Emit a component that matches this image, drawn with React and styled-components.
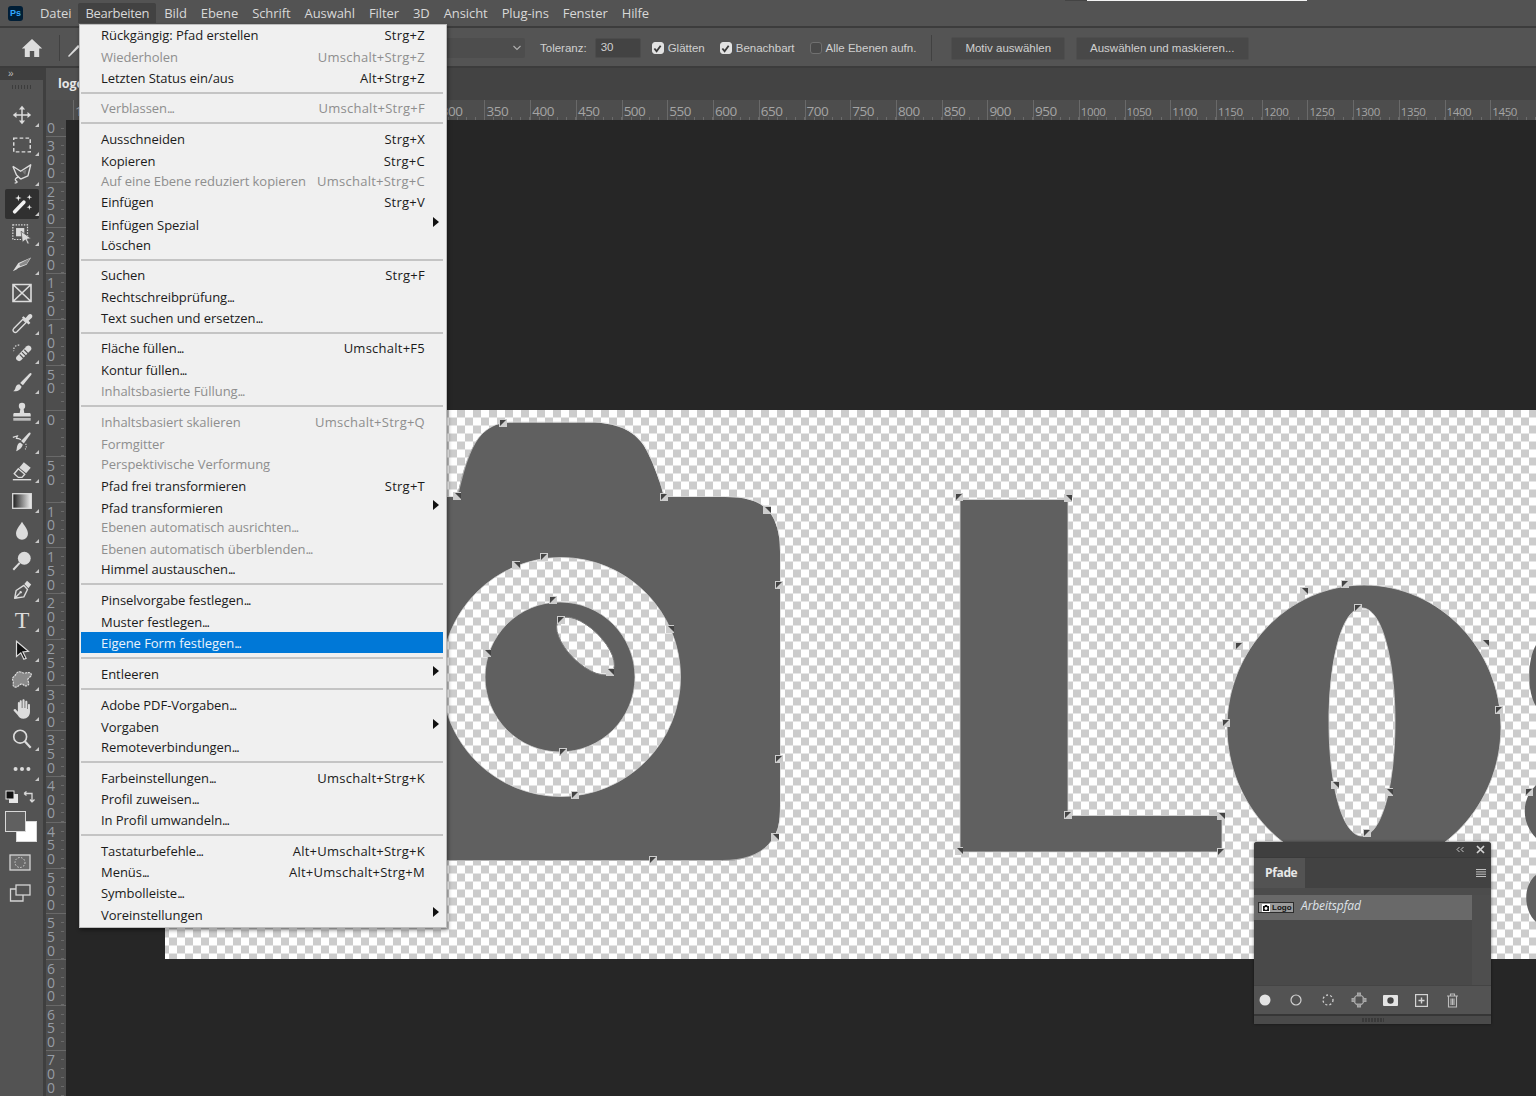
import React from "react";
import styled, { createGlobalStyle } from "styled-components";

const GlobalStyle = createGlobalStyle`
  html, body {
    margin: 0;
    padding: 0;
    background: #262626;
  }
  * { box-sizing: border-box; }
`;

const UI = `"Open Sans", "Noto Sans", sans-serif`;
const COND = `"Liberation Sans", "Open Sans", sans-serif`;

const Page = styled.div`
  position: relative;
  width: 1536px;
  height: 1096px;
  overflow: hidden;
  display: flex;
  flex-direction: column;
  background: #262626;
  font-family: ${UI};
`;

/* ---------- menu bar ---------- */
const MenuBar = styled.div`
  position: relative;
  height: 26px;
  flex: none;
  display: flex;
  align-items: center;
  padding-left: 8px;
  background: #535353;
`;

const PsLogo = styled.div`
  width: 15px;
  height: 15px;
  margin-right: 10px;
  border-radius: 3px;
  background: #001e36;
  color: #31a8ff;
  font: bold 9px/15px ${COND};
  text-align: center;
`;

const TopItem = styled.div`
  height: 20px;
  padding: 0 7px;
  margin-right: ${(p) => p.$gap || 0}px;
  border-radius: 2px 2px 0 0;
  font-size: 13px;
  line-height: 20px;
  letter-spacing: ${(p) => (p.$open ? -0.3 : -0.08)}px;
  color: #d8d8d8;
  background: ${(p) => (p.$open ? "#424242" : "transparent")};
`;

const TitleStrip = styled.div`
  position: absolute;
  top: 0;
  left: 1065px;
  width: 242px;
  height: 1px;
  background: linear-gradient(90deg, #444 0 22px, #f4f4f4 22px);
`;

/* ---------- options bar ---------- */
const OptionsBar = styled.div`
  height: 42px;
  flex: none;
  display: flex;
  align-items: center;
  padding: 2px 0 0 21px;
  background: #545454;
  border-top: 2px solid #3c3c3c;
  border-bottom: 2px solid #3c3c3c;
  color: #d0d0d0;
  font-family: ${COND};
  font-size: 11.5px;
`;

const OptionDivider = styled.div`
  width: 1px;
  height: 26px;
  margin: 0 ${(p) => p.$right}px 0 ${(p) => p.$left}px;
  background: #414141;
`;

const SelectBox = styled.div`
  width: 323px;
  height: 20px;
  margin: 0 15px 0 120px;
  display: flex;
  align-items: center;
  justify-content: flex-end;
  padding-right: 3px;
  background: #4d4d4d;
  border-radius: 2px;
  color: #aaa;
`;

const OptionLabel = styled.span`
  margin-right: ${(p) => p.$right || 0}px;
  white-space: nowrap;
`;

const NumberBox = styled.div`
  width: 46px;
  height: 20px;
  margin: 0 11px 0 8px;
  padding-left: 5px;
  background: #434343;
  border: 1px solid #4c4c4c;
  border-radius: 2px;
  line-height: 17px;
`;

const CheckBox = styled.div`
  width: 12px;
  height: 12px;
  margin-right: 4px;
  border-radius: 3px;
  display: flex;
  align-items: center;
  justify-content: center;
  background: ${(p) => (p.$on ? "#e2e2e2" : "#4a4a4a")};
  border: 1px solid ${(p) => (p.$on ? "#e2e2e2" : "#707070")};
`;

const OptionButton = styled.div`
  height: 23px;
  margin-right: 11px;
  padding: 0 ${(p) => p.$pad}px;
  background: #484848;
  border: 1px solid #4e4e4e;
  border-radius: 2px;
  line-height: 20px;
  white-space: nowrap;
`;

/* ---------- body ---------- */
const Body = styled.div`
  flex: 1;
  min-height: 0;
  display: flex;
`;

const ToolColumn = styled.div`
  width: 46px;
  flex: none;
  display: flex;
  flex-direction: column;
  background: #535353;
  border-right: 3px solid #3f3f3f;
`;

const ToolHeader = styled.div`
  height: 12px;
  padding-left: 8px;
  background: #3f3f3f;
  color: #bcbcbc;
  font: 10px/11px ${COND};
`;

const ToolGrip = styled.div`
  height: 20px;
  display: flex;
  justify-content: center;
  padding-top: 5px;
  &::before {
    content: "";
    width: 20px;
    height: 4px;
    background: repeating-linear-gradient(90deg, #3c3c3c 0 1px, transparent 1px 3px);
  }
`;

const Tool = styled.div`
  position: relative;
  height: 29.73px;
  margin: 0 4px 0 5px;
  display: flex;
  align-items: center;
  justify-content: center;
  border-radius: 2px;
  background: ${(p) => (p.$active ? "#303030" : "transparent")};
  color: #dcdcdc;
  &::after {
    content: "";
    display: ${(p) => (p.$corner ? "block" : "none")};
    position: absolute;
    right: 0;
    bottom: 3px;
    border-left: 4px solid transparent;
    border-bottom: 4px solid #c8c8c8;
  }
`;

const ToolGlyph = styled.span`
  font: 24px/24px "Liberation Serif", serif;
  color: #dcdcdc;
`;

const SwapRow = styled.div`
  height: 20px;
  margin: 3px 7px 0 5px;
  display: flex;
  align-items: center;
  justify-content: space-between;
`;

const ColorWell = styled.div`
  position: relative;
  width: 33px;
  height: 32px;
  margin: 4px 0 0 5px;
`;

const ColorSwatch = styled.div`
  position: absolute;
  width: 21px;
  height: 21px;
  left: ${(p) => p.$x}px;
  top: ${(p) => p.$y}px;
  background: ${(p) => p.$color};
  border: 1px solid #d8d8d8;
`;

const ScreenTool = styled.div`
  position: relative;
  height: 30px;
  margin-top: ${(p) => p.$top || 0}px;
  display: flex;
  align-items: center;
  justify-content: center;
  padding-right: 3px;
`;

const Main = styled.div`
  flex: 1;
  min-width: 0;
  display: flex;
  flex-direction: column;
`;

const TabRow = styled.div`
  height: 32px;
  flex: none;
  background: #434343;
`;

const DocTab = styled.div`
  width: 60px;
  height: 32px;
  padding: 9px 0 0 12px;
  background: #505050;
  color: #e6e6e6;
  font: bold 12.5px/14px ${UI};
`;

const HRuler = styled.div`
  height: 20px;
  flex: none;
  display: flex;
  background: #4d4d4d;
  overflow: hidden;
`;

const RulerCorner = styled.div`
  width: 27px;
  flex: none;
`;

const HCell = styled.div`
  width: 45.72px;
  flex: none;
  padding: 3px 0 0 1px;
  border-left: 1px solid #696969;
  color: #a4a4a4;
  font: ${(p) => (p.$small ? 11.5 : 13.5)}px/${(p) => (p.$small ? 18 : 17)}px ${UI};
  letter-spacing: ${(p) => (p.$small ? -0.4 : -0.5)}px;
  white-space: nowrap;
  background: repeating-linear-gradient(90deg, transparent 0 8px, #6a6a6a 8px 9px) 0 100% / 100% 3px no-repeat;
`;

const Work = styled.div`
  flex: 1;
  min-height: 0;
  display: flex;
`;

const VRuler = styled.div`
  width: 20px;
  flex: none;
  background: #4d4d4d;
  overflow: hidden;
`;

const VCell = styled.div`
  height: ${(p) => p.$h || 45.72}px;
  padding: ${(p) => (p.$first ? 1 : 2)}px 0 0 1px;
  border-top: ${(p) => (p.$first ? "none" : "1px solid #696969")};
  color: #969ca4;
  font: 14px/13.7px ${UI};
  background: repeating-linear-gradient(180deg, transparent 0 8px, #6a6a6a 8px 9px) 15px 0 / 3px 100% no-repeat;
`;

const VDigit = styled.span`
  display: block;
`;

const Canvas = styled.div`
  flex: 1;
  min-width: 0;
  padding: 290px 0 0 99px;
  background: #262626;
`;

const Doc = styled.div`
  height: 549px;
  background: repeating-conic-gradient(#cccccc 0 25%, #ffffff 0 50%) -4px -0.5px / 16px 16px;
`;

/* ---------- dropdown ---------- */
const Dropdown = styled.div`
  position: absolute;
  left: 79px;
  top: 24px;
  width: 368px;
  height: 904px;
  background: #f0f0f0;
  border: 1px solid #bdbdbd;
  box-shadow: 1px 2px 4px rgba(0, 0, 0, 0.45);
`;

const Row = styled.div`
  position: relative;
  height: 21px;
  margin: ${(p) => p.$nudge || 0}px 3px 0 1px;
  padding: 0 18px 0 20px;
  display: flex;
  align-items: center;
  justify-content: space-between;
  font-size: 13px;
  letter-spacing: -0.05px;
  white-space: nowrap;
  color: ${(p) => (p.$hot ? "#eaf3fc" : p.$off ? "#8e8e8e" : "#1b1b1b")};
  background: ${(p) => (p.$hot ? "#0078d7" : "transparent")};
`;

const Shortcut = styled.span`
  letter-spacing: 0.25px;
`;

const Dots = styled.span`
  letter-spacing: -1.2px;
`;

const Arrow = styled.span`
  position: absolute;
  right: 4px;
  top: 3px;
  border-left: 6px solid #111;
  border-top: 5px solid transparent;
  border-bottom: 5px solid transparent;
`;

const Rule = styled.div`
  height: 9px;
  margin: 0 3px 0 1px;
  display: flex;
  align-items: center;
  &::before {
    content: "";
    width: 100%;
    height: 2px;
    background: #c4c4c4;
  }
`;

/* ---------- paths panel ---------- */
const Panel = styled.div`
  position: absolute;
  left: 1254px;
  top: 842px;
  width: 237px;
  height: 182px;
  display: flex;
  flex-direction: column;
  border-radius: 3px 3px 0 0;
  background: #494949;
  box-shadow: 0 0 3px rgba(0, 0, 0, 0.5);
`;

const PanelTitle = styled.div`
  height: 15px;
  flex: none;
  display: flex;
  align-items: center;
  justify-content: flex-end;
  gap: 12px;
  padding-right: 6px;
  background: #3f3f3f;
  border-radius: 3px 3px 0 0;
`;

const PanelTabs = styled.div`
  height: 31px;
  flex: none;
  display: flex;
  align-items: center;
  justify-content: space-between;
  padding-right: 5px;
  background: #424242;
  border-top: 1px solid #3a3a3a;
`;

const PanelTab = styled.div`
  width: 51px;
  height: 30px;
  padding-left: 11px;
  background: #535353;
  color: #e8e8e8;
  font: bold 12px/29px ${UI};
  letter-spacing: -0.35px;
`;

const PanelList = styled.div`
  flex: 1;
  min-height: 0;
  display: flex;
  border-top: 7px solid #4c4c4c;
`;

const PathArea = styled.div`
  flex: 1;
`;

const ScrollTrack = styled.div`
  width: 19px;
  background: #4e4e4e;
`;

const PathRow = styled.div`
  height: 25px;
  display: flex;
  align-items: center;
  padding-left: 4px;
  background: #696969;
`;

const Thumb = styled.div`
  width: 36px;
  height: 11px;
  margin-right: 7px;
  display: flex;
  align-items: center;
  gap: 2px;
  padding-left: 3px;
  background: #9c9c9c;
  border: 1px solid #2c2c2c;
  overflow: hidden;
`;

const ThumbText = styled.span`
  color: #111;
  font: bold 8px/9px ${COND};
`;

const PathName = styled.span`
  color: #dfe3e8;
  font-size: 12px;
  font-style: italic;
  letter-spacing: -0.1px;
  margin-top: -5px;
`;

const PanelFooter = styled.div`
  height: 29px;
  flex: none;
  display: flex;
  align-items: center;
  background: #535353;
  border-top: 1px solid #444;
  padding-left: 0;
`;

const FooterIcon = styled.div`
  width: 31.3px;
  flex: none;
  margin-left: ${(p) => p.$lead || 0}px;
  display: flex;
  justify-content: center;
`;

const PanelGrip = styled.div`
  height: 10px;
  flex: none;
  display: flex;
  align-items: center;
  justify-content: center;
  background: #4a4a4a;
  border-top: 2px solid #363636;
  &::before {
    content: "";
    width: 22px;
    height: 4px;
    background: repeating-linear-gradient(90deg, #3a3a3a 0 2px, transparent 2px 3px);
  }
`;

/* ---------- data ---------- */
const topMenus = ["Bild", "Ebene", "Schrift", "Auswahl", "Filter", "3D", "Ansicht", "Plug-ins", "Fenster", "Hilfe"];

// n = extra px above the row, the reference's rows are not evenly spaced
const menuGroups = [
  [
    { t: "Rückgängig: Pfad erstellen", k: "Strg+Z", n: -1 },
    { t: "Wiederholen", k: "Umschalt+Strg+Z", off: true, n: 1 },
    { t: "Letzten Status ein/aus", k: "Alt+Strg+Z" },
  ],
  [{ t: "Verblassen...", k: "Umschalt+Strg+F", off: true }],
  [
    { t: "Ausschneiden", k: "Strg+X", n: 1 },
    { t: "Kopieren", k: "Strg+C", n: 1 },
    { t: "Auf eine Ebene reduziert kopieren", k: "Umschalt+Strg+C", off: true, n: -1 },
    { t: "Einfügen", k: "Strg+V" },
    { t: "Einfügen Spezial", sub: true, n: 2 },
    { t: "Löschen", n: -1 },
  ],
  [
    { t: "Suchen", k: "Strg+F" },
    { t: "Rechtschreibprüfung...", n: 1 },
    { t: "Text suchen und ersetzen..." },
  ],
  [
    { t: "Fläche füllen...", k: "Umschalt+F5" },
    { t: "Kontur füllen...", n: 1 },
    { t: "Inhaltsbasierte Füllung...", off: true },
  ],
  [
    { t: "Inhaltsbasiert skalieren", k: "Umschalt+Strg+Q", off: true, n: 1 },
    { t: "Formgitter", off: true, n: 1 },
    { t: "Perspektivische Verformung", off: true, n: -1 },
    { t: "Pfad frei transformieren", k: "Strg+T", n: 1 },
    { t: "Pfad transformieren", sub: true, n: 1 },
    { t: "Ebenen automatisch ausrichten...", off: true, n: -2 },
    { t: "Ebenen automatisch überblenden...", off: true, n: 1 },
    { t: "Himmel austauschen...", n: -1 },
  ],
  [
    { t: "Pinselvorgabe festlegen...", n: 1 },
    { t: "Muster festlegen...", n: 1 },
    { t: "Eigene Form festlegen...", hot: true },
  ],
  [{ t: "Entleeren", sub: true, n: 1 }],
  [
    { t: "Adobe PDF-Vorgaben...", n: 1 },
    { t: "Vorgaben", sub: true, n: 1 },
    { t: "Remoteverbindungen...", n: -1 },
  ],
  [
    { t: "Farbeinstellungen...", k: "Umschalt+Strg+K", n: 1 },
    { t: "Profil zuweisen..." },
    { t: "In Profil umwandeln..." },
  ],
  [
    { t: "Tastaturbefehle...", k: "Alt+Umschalt+Strg+K", n: 1 },
    { t: "Menüs...", k: "Alt+Umschalt+Strg+M" },
    { t: "Symbolleiste..." },
    { t: "Voreinstellungen", sub: true, n: 1 },
  ],
];

const menuLabel = (t) =>
  t.endsWith("...") ? (
    <>
      {t.slice(0, -3)}
      <Dots>...</Dots>
    </>
  ) : (
    t
  );

// cells from 50 up to 250 lie fully under the open menu, so they stay empty
const hLabels = ["100", "", "", "", "", "", "", "", "300"];
for (let v = 350; v <= 1450; v += 50) hLabels.push(String(v));

const vLabels = [];
for (let v = 300; v >= 0; v -= 50) vLabels.push(v);
for (let v = 50; v <= 700; v += 50) vLabels.push(v);

/* ---------- icons ---------- */
const Ico = ({ children, size = 22, view = 24 }) => (
  <svg width={size} height={size} viewBox={`0 0 ${view} ${view}`} fill="currentColor" stroke="none">
    {children}
  </svg>
);

const toolIcons = [
  // move
  <Ico key="move">
    <path d="M11.2 6h1.6v5.2H18V8.6l4 3.4-4 3.4v-2.6h-5.2V18h2.6L12 22l-3.4-4h2.6v-5.2H6v2.6L2 12l4-3.4v2.6h5.2V6H8.6L12 2l3.4 4z" />
  </Ico>,
  // marquee
  <Ico key="marquee">
    <rect x="3" y="4.500" width="18" height="15" fill="none" stroke="currentColor" strokeWidth="1.600" strokeDasharray="4 2.400" />
  </Ico>,
  // lasso
  <Ico key="lasso">
    <path d="M2 3.500l8.500 5.500L21.500 2l-3 12-8 3.500M2 3.500l4 9.500 4.500 4.500" fill="none" stroke="currentColor" strokeWidth="1.500" strokeLinejoin="round" />
    <path d="M8 15.500c-3 1-4.500 2.500-2.500 4s1.500 2-1.500 2.500" fill="none" stroke="currentColor" strokeWidth="1.400" />
    <path d="M12 9l5-2-1.500 6z" fill="#7a7a7a" />
  </Ico>,
  // wand
  <Ico key="wand">
    <path d="M4 20.500L14 10" stroke="#f2f2f2" strokeWidth="4" strokeLinecap="round" />
    <path d="M8 2l.8 2.700 2.700.8-2.700.8L8 9l-.8-2.700-2.700-.8 2.700-.8zM20 1.500l.7 2.300 2.300.7-2.300.7-.7 2.300-.7-2.300-2.300-.7 2.300-.7zM20 12.500l.7 2.300 2.300.7-2.300.7-.7 2.300-.7-2.300-2.300-.7 2.300-.7z" fill="#f2f2f2" />
  </Ico>,
  // object selection
  <Ico key="object">
    <rect x="2" y="2" width="16" height="16" fill="none" stroke="currentColor" strokeWidth="1.300" strokeDasharray="1.600 1.400" />
    <rect x="5.500" y="5.500" width="9" height="9" />
    <path d="M11 9l11 8-4.400.6L20 22.400l-2 .6-2.200-4.600L12.400 21z" stroke="#535353" strokeWidth="0.800" />
  </Ico>,
  // slice
  <Ico key="slice">
    <path d="M2 21l6-9 14-6-5 8-9 3.400L6 19z" />
    <path d="M9 13l12-6.400-4 6.400-7 2.600z" fill="#8a8a8a" />
  </Ico>,
  // frame
  <Ico key="frame" size={24}>
    <path d="M3 3.500h18v17H3zM3 3.500l18 17M21 3.500l-18 17" fill="none" stroke="currentColor" strokeWidth="1.600" />
  </Ico>,
  // eyedropper
  <Ico key="dropper">
    <path d="M3 21.500c-1-1-.8-2.500 0-3.400L13 8l3.500 3.500-10 10c-1 .9-2.500 1-3.500 0z" fill="none" stroke="currentColor" strokeWidth="1.500" />
    <path d="M12 6l1.500-1.500 2.500 2 3-3.500c1.200-1 2.800-1 3.700 0s.8 2.400-.2 3.500l-3.300 3 2 2.500L19 13.500z" />
  </Ico>,
  // healing
  <Ico key="heal">
    <path d="M6 16L17 4.500c1.200-1 3-1 4.300.3s1.300 3 .2 4.200L11 20c-1.200 1.200-3 1.200-4.300 0s-1.800-2.800-.7-4z" />
    <path d="M9.500 13.500l5 5M12 11l5 5M14.500 8.500l5 5" stroke="#535353" strokeWidth="1.300" />
    <path d="M9 3.500C5 3 2.500 6 3 10" fill="none" stroke="currentColor" strokeWidth="1.300" strokeDasharray="1.600 1.600" />
  </Ico>,
  // brush
  <Ico key="brush">
    <path d="M22 2.500c.6.500.5 1 0 1.800L13 15.500l-3-2.500L20 3c.8-.7 1.400-1 2-.5z" />
    <path d="M9 14.500l2.500 2.300c-.5 3-3.500 5.700-9 5.200 2.500-1.500 2-3.500 3-5.300.7-1.200 2-2.200 3.500-2.200z" />
  </Ico>,
  // stamp
  <Ico key="stamp">
    <circle cx="12" cy="5.500" r="3.500" />
    <path d="M10.300 8h3.400l.8 5H20c1 0 1.500.7 1.500 1.500V17h-19v-2.500c0-.8.5-1.500 1.500-1.500h5.500z" />
    <rect x="2.500" y="18.500" width="19" height="3" fill="#bdbdbd" />
  </Ico>,
  // history brush
  <Ico key="history">
    <path d="M21 2c.6.500.5 1 0 1.800l-7 9.700-3-2.500 8-8.500c.8-.7 1.400-1 2-.5z" />
    <path d="M10 12.500l2.800 2.300c-.4 3-3.400 6.200-7.300 7.200 1-2.200.6-3.700 1.200-5.500.5-1.700 1.800-3.800 3.300-4z" />
    <path d="M2 7l5-1.500-1 2.500c3 0 4 1 5 1.500" fill="none" stroke="currentColor" strokeWidth="1.300" />
    <path d="M16 14c1 2 1 4-.5 6" fill="none" stroke="currentColor" strokeWidth="1.200" strokeDasharray="1.200 1.500" />
  </Ico>,
  // eraser
  <Ico key="eraser">
    <path d="M14 2.500l7.500 6-5 6-7.500-6z" />
    <path d="M8 9.500l7 6-3 3.500H8l-4.500-4z" fill="none" stroke="currentColor" strokeWidth="1.500" />
    <path d="M2 21.500h20" stroke="currentColor" strokeWidth="1.500" />
  </Ico>,
  // gradient
  <svg key="gradient" width="20" height="16" viewBox="0 0 20 16">
    <defs>
      <linearGradient id="gradTool" x1="0" x2="1" y1="0" y2="0">
        <stop offset="0" stopColor="#1c1c1c" />
        <stop offset="1" stopColor="#f2f2f2" />
      </linearGradient>
    </defs>
    <rect x="0.700" y="0.700" width="18.600" height="14.600" fill="url(#gradTool)" stroke="#dcdcdc" strokeWidth="1.300" />
  </svg>,
  // blur
  <Ico key="blur">
    <path d="M12 2c2.500 4.500 6.500 8 6.500 13a6.500 6.500 0 0 1-13 0C5.500 10 9.500 6.500 12 2z" />
  </Ico>,
  // dodge
  <Ico key="dodge">
    <circle cx="14.500" cy="9" r="7" />
    <path d="M9.500 14L2.500 21.500" stroke="currentColor" strokeWidth="2.200" />
  </Ico>,
  // pen
  <Ico key="pen">
    <path d="M4 21l1.600-8.500 8.400-5.500 4 4.500-4 8L4 21zM4 21l5.500-5.500" fill="none" stroke="currentColor" strokeWidth="1.500" strokeLinejoin="round" />
    <path d="M14.500 5.500l3-3.500 4.500 4-3 4z" />
    <circle cx="10.500" cy="14.500" r="1.300" />
  </Ico>,
  // type
  <ToolGlyph key="type">T</ToolGlyph>,
  // path selection
  <Ico key="path">
    <path d="M6 2.500l13 11-6 .6 3.500 7-2.500 1-3.300-7L6 19z" fill="#111" stroke="#dcdcdc" strokeWidth="1.300" />
  </Ico>,
  // shape
  <Ico key="shape">
    <path d="M9 3c3 0 3.500 2 6 1.500s6-1.500 7 1-2.500 3.500-3.500 5.500 3 5-.5 7-4.500-2.500-7-1.500-4 4-7 3-1-4-1.500-6S.500 10.500 3 8.500 6 3 9 3z" fill="#8a8a8a" stroke="#dcdcdc" strokeWidth="1.300" strokeDasharray="2.400 .8" />
  </Ico>,
  // hand
  <Ico key="hand">
    <path d="M9.500 3.500c0-1.500 2.200-1.500 2.200 0V11h.8V2.500c0-1.500 2.300-1.500 2.300 0V11h.8V4c0-1.500 2.200-1.500 2.200 0v8h.7V7.500c0-1.400 2.200-1.400 2.200 0V15c0 4.500-3 7.500-7 7.500-3.500 0-5-1.500-6.500-4L3 14c-.8-1.300 1-2.700 2.300-1.500L7.500 15V5.500c0-1.400 2-1.400 2 0z" />
  </Ico>,
  // zoom
  <Ico key="zoom">
    <circle cx="10" cy="9.500" r="7" fill="none" stroke="currentColor" strokeWidth="1.800" />
    <path d="M15 14.500l6.500 7" stroke="currentColor" strokeWidth="2.400" />
  </Ico>,
  // more
  <Ico key="more">
    <circle cx="5" cy="12" r="2.200" />
    <circle cx="12" cy="12" r="2.200" />
    <circle cx="19" cy="12" r="2.200" />
  </Ico>,
];

/* ---------- artwork ---------- */
const ART_FILL = "#606060";
const LINE = "#d8d8d8";

const Anchor = ({ x, y, flip }) => (
  <g transform={`translate(${x - 4} ${y - 4})`}>
    <rect width="8" height="8" fill="#cdcdcd" />
    <path d={flip ? "M8 1v6L2 1z" : "M1 1h6L1 7z"} fill="#444" />
  </g>
);

const cameraAnchors = [
  [503, 423], [457, 496, 1], [664, 497], [767, 510, 1], [779, 585], [779, 759], [775, 837, 1], [653, 860],
  [575, 795], [563, 752], [487, 653, 1], [553, 600], [544, 557], [516, 565, 1], [670, 629, 1], [561, 620], [610, 672, 1],
];
const letterAnchors = [
  [959, 497], [1068, 498, 1], [1068, 815], [1221, 816, 1], [1221, 852], [959, 851, 1],
  [1304, 591, 1], [1345, 584], [1358, 608], [1485, 643, 1], [1499, 710], [1239, 646], [1226, 723],
  [1335, 785, 1], [1389, 792, 1], [1367, 833], [1529, 792],
];

const CAMERA_BODY =
  "M340 497H457C463 470 470 445 483 433C491 426 498 423 510 422.500H590C615 422.500 634 430 644 446C652 460 659 478 664 497H725C750 497 764 503 772 516C778 526 780 538 780 552V805C780 825 778 834 768 845C758 856 742 861 722 861H340Z";
const LENS_RING = "M561 557.500a119.500 119.500 0 1 0 .01 0Z";
const LENS_SHINE = "M559 620A37 17 45 1 0 612 672A37 17 45 1 0 559 620Z";
const LETTERS =
  "M960 499.500H1068V815.500H1222V852H960ZM1364 585C1440 585 1501 650 1501 727C1501 805 1440 870 1364 870C1288 870 1227 805 1227 727C1227 650 1288 585 1364 585ZM1362 608C1342 608 1329 660 1329 722C1329 784 1342 836 1362 836C1382 836 1395 784 1395 722C1395 660 1382 608 1362 608Z";

const Artwork = () => (
  <svg width="1371" height="549" viewBox="165 410 1371 549" style={{ display: "block" }}>
    <path fillRule="evenodd" fill={ART_FILL} d={`${CAMERA_BODY} ${LENS_RING}`} />
    <path fillRule="evenodd" fill={ART_FILL} d={`M560 602a75 75 0 1 0 .01 0Z ${LENS_SHINE}`} />
    <path d={CAMERA_BODY} fill="none" stroke={LINE} strokeWidth="1" transform="translate(.5 -.5)" opacity=".7" />
    <circle cx="561" cy="677" r="119.500" fill="none" stroke={LINE} strokeWidth="1" opacity=".7" />
    <circle cx="560" cy="677" r="75" fill="none" stroke={LINE} strokeWidth="1" opacity=".7" />
    <path d={LENS_SHINE} fill="none" stroke="#777" strokeWidth="1" />

    <path fillRule="evenodd" d={LETTERS} fill={ART_FILL} />
    <path d="M1536 645C1527 660 1527 692 1536 706Z M1536 785C1521 800 1521 822 1536 838Z M1536 875C1523 885 1523 910 1536 922Z" fill={ART_FILL} />
    <path fill="none" stroke={LINE} strokeWidth="1" opacity=".8" d={LETTERS} />
    {[...cameraAnchors, ...letterAnchors].map(([x, y, flip]) => (
      <Anchor key={`${x}-${y}`} x={x} y={y} flip={flip} />
    ))}
  </svg>
);

const Tick = () => (
  <svg width="9" height="9" viewBox="0 0 10 10">
    <path d="M1.500 5l2.500 3 4.500-6" fill="none" stroke="#3a3a3a" strokeWidth="2" />
  </svg>
);

const footerIcons = [
  <svg key="fill" width="14" height="14" viewBox="0 0 14 14"><circle cx="7" cy="7" r="5.500" fill="#e4e4e4" /></svg>,
  <svg key="stroke" width="14" height="14" viewBox="0 0 14 14"><circle cx="7" cy="7" r="5" fill="none" stroke="#d0d0d0" strokeWidth="1.200" /></svg>,
  <svg key="sel" width="14" height="14" viewBox="0 0 14 14"><circle cx="7" cy="7" r="5" fill="none" stroke="#d0d0d0" strokeWidth="1.300" strokeDasharray="2 2.200" /></svg>,
  <svg key="work" width="16" height="16" viewBox="0 0 16 16" fill="#9a9a9a" stroke="#a8a8a8">
    <circle cx="8" cy="8" r="5" fill="none" strokeWidth="1.200" />
    <rect x="6.500" y="1" width="3" height="3" />
    <rect x="6.500" y="12" width="3" height="3" />
    <rect x="1" y="6.500" width="3" height="3" />
    <rect x="12" y="6.500" width="3" height="3" />
  </svg>,
  <svg key="mask" width="15" height="11" viewBox="0 0 15 11">
    <rect width="15" height="11" rx="1" fill="#e4e4e4" />
    <circle cx="7.500" cy="5.500" r="3.200" fill="#444" />
  </svg>,
  <svg key="add" width="13" height="13" viewBox="0 0 13 13" fill="none" stroke="#d4d4d4" strokeWidth="1.200">
    <rect x=".6" y=".6" width="11.800" height="11.800" />
    <path d="M6.500 3.500v6M3.500 6.500h6" strokeWidth="1.400" />
  </svg>,
  <svg key="trash" width="13" height="15" viewBox="0 0 13 15" fill="none" stroke="#bcbcbc" strokeWidth="1.100">
    <path d="M1 3h11M4.500 3V1h4v2M2.500 3v11h8V3M5 5.500V12M6.500 5.500V12M8 5.500V12" />
  </svg>,
];

export default function App() {
  return (
    <Page>
      <GlobalStyle />
      <MenuBar>
        <PsLogo>Ps</PsLogo>
        <TopItem>Datei</TopItem>
        <TopItem $open $gap={1}>Bearbeiten</TopItem>
        {topMenus.map((m) => (
          <TopItem key={m}>{m}</TopItem>
        ))}
        <TitleStrip />
      </MenuBar>

      <OptionsBar>
        <svg width="22" height="20" viewBox="0 0 22 20" fill="#dcdcdc">
          <path d="M11 1L.8 10.500h3V19h5v-6h4.400v6h5v-8.500h3z" />
        </svg>
        <OptionDivider $left={16} $right={8} />
        <svg width="14" height="20" viewBox="0 0 14 20" fill="#dcdcdc">
          <path d="M1 19l-1-1 10-11 2 1.500z" />
        </svg>
        <SelectBox>
          <svg width="10" height="8" viewBox="0 0 10 8">
            <path d="M1.500 2l3.500 3.500L8.500 2" fill="none" stroke="#b0b0b0" strokeWidth="1.100" />
          </svg>
        </SelectBox>
        <OptionLabel>Toleranz:</OptionLabel>
        <NumberBox>30</NumberBox>
        <CheckBox $on><Tick /></CheckBox>
        <OptionLabel $right={15}>Glätten</OptionLabel>
        <CheckBox $on><Tick /></CheckBox>
        <OptionLabel $right={15}>Benachbart</OptionLabel>
        <CheckBox />
        <OptionLabel>Alle Ebenen aufn.</OptionLabel>
        <OptionDivider $left={15} $right={19} />
        <OptionButton $pad={13}>Motiv auswählen</OptionButton>
        <OptionButton $pad={13}>Auswählen und maskieren...</OptionButton>
      </OptionsBar>

      <Body>
        <ToolColumn>
          <ToolHeader>»</ToolHeader>
          <ToolGrip />
          {toolIcons.map((icon, i) => (
            <Tool key={i} $active={i === 3} $corner={i !== 6}>
              {icon}
            </Tool>
          ))}
          <SwapRow>
            <svg width="14" height="14" viewBox="0 0 14 14">
              <rect x="4" y="4" width="9" height="9" fill="#e6e6e6" />
              <rect x="1" y="1" width="8" height="8" fill="#111" stroke="#e6e6e6" />
            </svg>
            <svg width="13" height="14" viewBox="0 0 13 14" fill="none" stroke="#d8d8d8" strokeWidth="1.300">
              <path d="M1 3.500h8v8M1 3.500l2.500-2M1 3.500l2.500 2M9 12l-2-2.500M9 12l2.500-2.500" />
            </svg>
          </SwapRow>
          <ColorWell>
            <ColorSwatch $x={11} $y={10} $color="#ffffff" />
            <ColorSwatch $x={0} $y={0} $color="#606060" />
          </ColorWell>
          <ScreenTool $top={5}>
            <svg width="22" height="17" viewBox="0 0 22 17">
              <rect x="1" y="1" width="20" height="15" fill="#6a6a6a" stroke="#d4d4d4" strokeWidth="1.300" />
              <circle cx="11" cy="8.500" r="5" fill="none" stroke="#d4d4d4" strokeDasharray="1.500 1.500" />
            </svg>
          </ScreenTool>
          <ScreenTool>
            <svg width="22" height="18" viewBox="0 0 22 18" fill="none" stroke="#d4d4d4" strokeWidth="1.300">
              <rect x="7" y="1" width="14" height="10" />
              <path d="M7 5H1.500v12H14v-6" />
            </svg>
          </ScreenTool>
        </ToolColumn>

        <Main>
          <TabRow>
            <DocTab>logo</DocTab>
          </TabRow>
          <HRuler>
            <RulerCorner />
            {hLabels.map((v, i) => (
              <HCell key={i} $small={Number(v) >= 1000}>{v}</HCell>
            ))}
          </HRuler>
          <Work>
            <VRuler>
              <VCell $first $h={16}><VDigit>0</VDigit></VCell>
              {vLabels.map((v, i) => (
                <VCell key={i}>
                  {String(v).split("").map((d, j) => (
                    <VDigit key={j}>{d}</VDigit>
                  ))}
                </VCell>
              ))}
            </VRuler>
            <Canvas>
              <Doc>
                <Artwork />
              </Doc>
            </Canvas>
          </Work>
        </Main>
      </Body>

      <Dropdown>
        {menuGroups.map((group, g) => (
          <React.Fragment key={g}>
            {g > 0 && <Rule />}
            {group.map((item) => (
              <Row key={item.t} $off={item.off} $hot={item.hot} $nudge={item.n}>
                <span>{menuLabel(item.t)}</span>
                {item.k && <Shortcut>{item.k}</Shortcut>}
                {item.sub && <Arrow />}
              </Row>
            ))}
          </React.Fragment>
        ))}
      </Dropdown>

      <Panel>
        <PanelTitle>
          <svg width="8" height="7" viewBox="0 0 8 7" fill="none" stroke="#c8c8c8" strokeWidth="1">
            <path d="M3.500 1L1 3.500 3.500 6M7.500 1L5 3.500 7.500 6" />
          </svg>
          <svg width="9" height="9" viewBox="0 0 9 9" fill="none" stroke="#d4d4d4" strokeWidth="1.700">
            <path d="M1 1l7 7M8 1L1 8" />
          </svg>
        </PanelTitle>
        <PanelTabs>
          <PanelTab>Pfade</PanelTab>
          <svg width="10" height="8" viewBox="0 0 10 8" stroke="#c0c0c0" strokeWidth="1">
            <path d="M0 .5h10M0 2.900h10M0 5.200h10M0 7.500h10" />
          </svg>
        </PanelTabs>
        <PanelList>
          <PathArea>
            <PathRow>
              <Thumb>
                <svg width="8" height="8" viewBox="0 0 8 8">
                  <rect width="8" height="8" fill="#fff" />
                  <path d="M1 2h1.500l.5-1h2l.5 1H7v5H1z" fill="#111" />
                  <circle cx="4" cy="4.500" r="1.400" fill="#fff" />
                </svg>
                <ThumbText>Logo</ThumbText>
              </Thumb>
              <PathName>Arbeitspfad</PathName>
            </PathRow>
          </PathArea>
          <ScrollTrack />
        </PanelList>
        <PanelFooter>
          {footerIcons.map((icon, i) => (
            <FooterIcon key={i} $lead={i === 0 ? -4.6 : 0}>{icon}</FooterIcon>
          ))}
        </PanelFooter>
        <PanelGrip />
      </Panel>
    </Page>
  );
}
